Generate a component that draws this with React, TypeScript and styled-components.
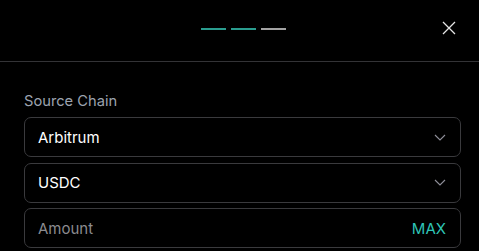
import React from "react";
import styled, { createGlobalStyle } from "styled-components";

const GS = createGlobalStyle`
  html, body {
    margin: 0;
    padding: 0;
    background: #000;
  }
  body {
    font-family: Inter, "Noto Sans", sans-serif;
    color: #fff;
  }
`;

const Panel = styled.div`
  width: 479px;
  height: 251px;
  background: #000;
  overflow: hidden;
  display: flex;
  flex-direction: column;
`;

const Header = styled.header`
  height: 62px;
  border-bottom: 1px solid #333336;
  display: flex;
  align-items: center;
  justify-content: center;
  position: relative;
  box-sizing: border-box;
  padding-bottom: 4px;
`;

const Steps = styled.div`
  display: flex;
  gap: 5px;
  margin-left: 8px;
`;

const Step = styled.span<{ active?: boolean }>`
  display: block;
  width: 25px;
  height: 2px;
  background: ${(p) => (p.active ? "#2a9d8f" : "#a3a3a3")};
`;

const Close = styled.button`
  position: absolute;
  right: 20px;
  top: 18px;
  width: 20px;
  height: 20px;
  padding: 0;
  border: 0;
  background: none;
  display: flex;
  align-items: center;
  justify-content: center;
  cursor: pointer;
`;

const Body = styled.div`
  padding: 31px 18px 0 24px;
  display: flex;
  flex-direction: column;
`;

const Label = styled.div`
  font-size: 14.7px;
  color: #9ca3af;
  line-height: 17px;
  margin-bottom: 7px;
`;

const Fields = styled.div`
  display: flex;
  flex-direction: column;
  gap: 5.5px;
`;

const Field = styled.div`
  height: 40px;
  box-sizing: border-box;
  border: 1px solid #3a3a3d;
  border-radius: 7px;
  display: flex;
  align-items: center;
  justify-content: space-between;
  padding: 0 14px 0 13px;
`;

const Value = styled.span<{ muted?: boolean }>`
  font-size: 15px;
  color: ${(p) => (p.muted ? "#8b8b8f" : "#ffffff")};
`;

const Max = styled.span`
  font-size: 15px;
  color: #2ec4b6;
`;

const Chevron = () => (
  <svg width="12" height="7" viewBox="0 0 12 7" fill="none">
    <path d="M1 1l5 5 5-5" stroke="#8f8f99" strokeWidth="1.1" />
  </svg>
);

export default function App() {
  return (
    <Panel>
      <GS />
      <Header>
        <Steps>
          <Step active />
          <Step active />
          <Step />
        </Steps>
        <Close aria-label="close">
          <svg width="14" height="14" viewBox="0 0 14 14" fill="none">
            <path d="M1 1l12 12M13 1L1 13" stroke="#e5e5e5" strokeWidth="1.3" />
          </svg>
        </Close>
      </Header>
      <Body>
        <Label>Source Chain</Label>
        <Fields>
          <Field>
            <Value>Arbitrum</Value>
            <Chevron />
          </Field>
          <Field>
            <Value>USDC</Value>
            <Chevron />
          </Field>
          <Field>
            <Value muted>Amount</Value>
            <Max>MAX</Max>
          </Field>
        </Fields>
      </Body>
    </Panel>
  );
}
